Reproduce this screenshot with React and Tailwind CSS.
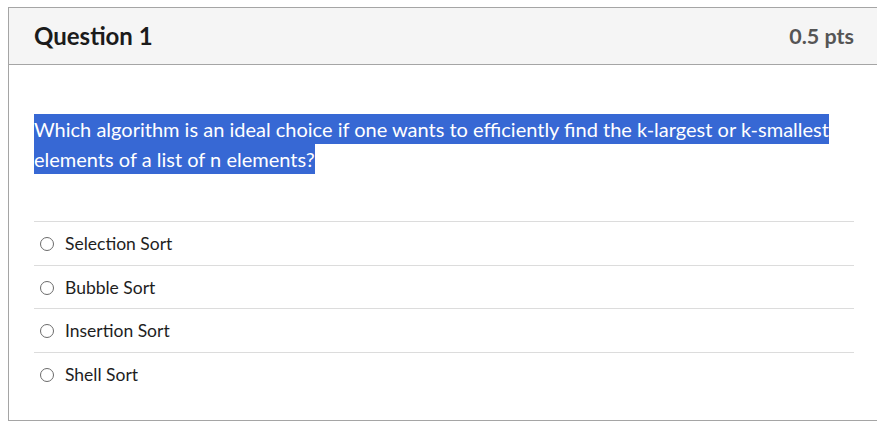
const answers = ['Selection Sort', 'Bubble Sort', 'Insertion Sort', 'Shell Sort']

function Radio() {
  return <span className="block h-[14px] w-[14px] shrink-0 rounded-full border border-[#6b6b6b] bg-white" />
}

export default function App() {
  return (
    <div className="min-h-[426px] bg-white pl-2 pt-[7px] font-['Lato','Liberation_Sans',sans-serif] text-[#2d3b45]">
      <div className="-mr-4 h-[414px] border border-[#a5a5a5]">
        <div className="flex h-[57px] items-center justify-between border-b border-[#a5a5a5] bg-[#f5f5f5] pl-[25px] pr-[38px]">
          <h2 className="text-[24px] font-bold text-[#1b1b1b]">Question 1</h2>
          <span className="text-[21.5px] font-bold text-[#555]">0.5 pts</span>
        </div>
        <div className="pl-[25px] pr-[38px] pt-[49px]">
          <p className="w-[815px] text-[20px] leading-[30px]">
            <span className="bg-[#3768d4] py-[3px] text-white [box-decoration-break:clone]">
              Which algorithm is an ideal choice if one wants to efficiently find the k-largest or k-smallest elements of a list of n elements?
            </span>
          </p>
          <div className="mt-[47px] w-[820px]">
            {answers.map((a) => (
              <div key={a} className="flex h-[43.5px] items-center gap-[11px] border-t border-[#dcdcdc] pl-[6px] pt-[2px] text-[17.5px] text-[#1e1e1e]">
                <Radio />
                <span>{a}</span>
              </div>
            ))}
          </div>
        </div>
      </div>
    </div>
  )
}
